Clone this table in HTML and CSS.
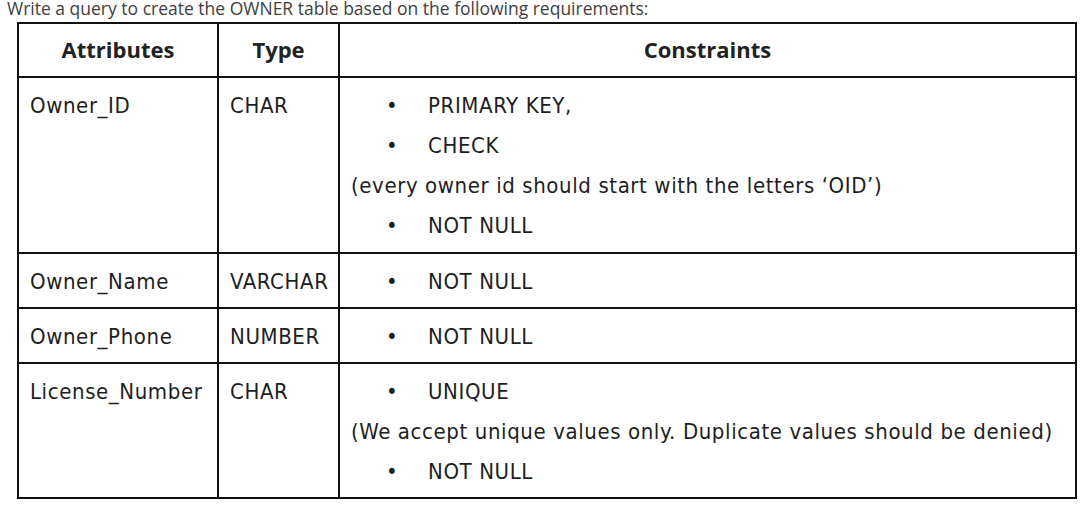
FILE: index.html
```html
<!DOCTYPE html>
<html>
<head>
<meta charset="utf-8">
<link rel="stylesheet" href="styles.css">
</head>
<body>
<p class="intro">Write a query to create the OWNER table based on the following requirements:</p>
<table class="spec">
  <colgroup>
    <col class="c1"><col class="c2"><col class="c3">
  </colgroup>
  <thead>
    <tr><th>Attributes</th><th>Type</th><th>Constraints</th></tr>
  </thead>
  <tbody>
    <tr class="r1">
      <td>Owner_ID</td>
      <td>CHAR</td>
      <td>
        <div class="li"><span class="dot">•</span>PRIMARY KEY,</div>
        <div class="li"><span class="dot">•</span>CHECK</div>
        <div class="note">(every owner id should start with the letters ‘OID’)</div>
        <div class="li"><span class="dot">•</span>NOT NULL</div>
      </td>
    </tr>
    <tr class="r2">
      <td>Owner_Name</td>
      <td>VARCHAR</td>
      <td><div class="li"><span class="dot">•</span>NOT NULL</div></td>
    </tr>
    <tr class="r3">
      <td>Owner_Phone</td>
      <td>NUMBER</td>
      <td><div class="li"><span class="dot">•</span>NOT NULL</div></td>
    </tr>
    <tr class="r4">
      <td>License_Number</td>
      <td>CHAR</td>
      <td>
        <div class="li"><span class="dot">•</span>UNIQUE</div>
        <div class="note">(We accept unique values only. Duplicate values should be denied)</div>
        <div class="li"><span class="dot">•</span>NOT NULL</div>
      </td>
    </tr>
  </tbody>
</table>
</body>
</html>
```
FILE: styles.css
```css
html, body {
  margin: 0;
  padding: 0;
  background: #ffffff;
}
body {
  padding: 0 0 0 7px;
}
.intro {
  margin: -1px 0 0 0;
  font-family: "Open Sans", sans-serif;
  font-size: 17.5px;
  line-height: 18px;
  color: #404040;
  height: 23px;
}
.spec {
  margin-left: 10px;
  border-collapse: collapse;
  width: 1060px;
  table-layout: fixed;
}
.c1 { width: 200px; }
.c2 { width: 121px; }
.spec th, .spec td {
  border: 2px solid #111;
  vertical-align: top;
}
.spec th {
  font-family: "Open Sans", sans-serif;
  font-weight: 700;
  font-size: 22px;
  color: #222;
  height: 50px;
  padding: 0 0 2px 0;
  vertical-align: middle;
  text-align: center;
}
.spec td {
  font-family: "DejaVu Sans Condensed", "DejaVu Sans", sans-serif;
  font-size: 22px;
  letter-spacing: 0.6px;
  color: #1e1e1e;
  line-height: 40px;
  padding: 8px 10px 5px 11px;
}
.r1 td { height: 161px; }
.r2 td { height: 39px; }
.r3 td { height: 40px; }
.r4 td { height: 120px; }
.li {
  padding-left: 35px;
  white-space: nowrap;
}
.dot {
  display: inline-block;
  width: 42px;
}
.note {
  white-space: nowrap;
}
```
